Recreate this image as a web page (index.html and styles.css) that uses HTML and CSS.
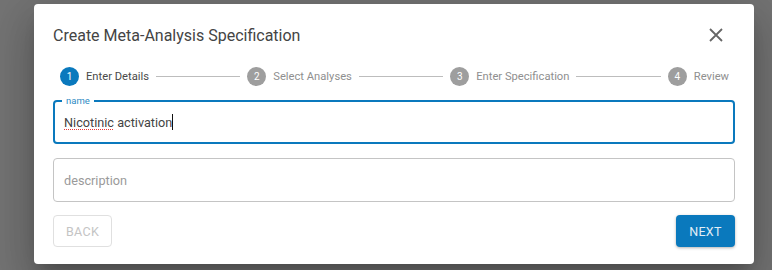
FILE: index.html
```html
<!DOCTYPE html>
<html lang="en">
<head>
    <meta charset="UTF-8">
    <meta name="viewport" content="width=device-width, initial-scale=1.0">
    <title>Create Meta-Analysis Specification</title>
    <link rel="stylesheet" href="styles.css">
</head>
<body>
    <div class="backdrop">
        <div class="dialog">
            <div class="dialog-header">
                <h2 class="dialog-title">Create Meta-Analysis Specification</h2>
                <button class="close-button" aria-label="close">
                    <svg width="14" height="14" viewBox="0 0 14 14">
                        <path d="M1 1 L13 13 M13 1 L1 13" stroke="#666" stroke-width="1.8" fill="none"/>
                    </svg>
                </button>
            </div>

            <div class="stepper">
                <div class="step active"><span class="step-icon">1</span><span class="step-label">Enter Details</span></div>
                <div class="connector"></div>
                <div class="step"><span class="step-icon">2</span><span class="step-label">Select Analyses</span></div>
                <div class="connector"></div>
                <div class="step"><span class="step-icon">3</span><span class="step-label">Enter Specification</span></div>
                <div class="connector"></div>
                <div class="step"><span class="step-icon">4</span><span class="step-label">Review</span></div>
            </div>

            <div class="field focused">
                <span class="field-label">name</span>
                <div class="field-input"><span class="misspelled">Nicotinic</span> activation<span class="caret"></span></div>
            </div>

            <div class="field">
                <div class="field-input placeholder">description</div>
            </div>

            <div class="actions">
                <button class="btn btn-back" disabled>BACK</button>
                <button class="btn btn-next">NEXT</button>
            </div>
        </div>
    </div>
</body>
</html>
```

FILE: styles.css
```css
html, body {
    margin: 0;
    padding: 0;
}
body {
    background-color: #737373;
    font-family: Roboto, 'Liberation Sans', sans-serif;
}
.backdrop {
    height: 270px;
    padding: 4px 18px 0 34px;
    box-sizing: border-box;
}
.dialog {
    width: 720px;
    height: 260px;
    box-sizing: border-box;
    background-color: white;
    border-radius: 4px;
    padding: 15px 19px 0 19px;
    box-shadow: 0 11px 15px -7px rgba(0, 0, 0, 0.2), 0 24px 38px 3px rgba(0, 0, 0, 0.14), 0 9px 46px 8px rgba(0, 0, 0, 0.12);
}

/* Kopfzeile */
.dialog-header {
    display: flex;
    align-items: center;
    justify-content: space-between;
    height: 32px;
}
.dialog-title {
    margin: 0;
    font-size: 16px;
    font-weight: 400;
    color: #444;
}
.close-button {
    background: none;
    border: none;
    padding: 0;
    margin-right: 12px;
    width: 14px;
    height: 14px;
    display: flex;
    cursor: pointer;
}

/* Stepper */
.stepper {
    display: flex;
    align-items: center;
    margin-top: 16px;
    height: 19px;
}
.step {
    display: flex;
    align-items: center;
    padding: 0 7px;
}
.step:last-child {
    padding-right: 6px;
}
.step-icon {
    width: 19px;
    height: 19px;
    border-radius: 50%;
    background-color: #9e9e9e;
    color: white;
    font-size: 10px;
    display: flex;
    align-items: center;
    justify-content: center;
}
.step.active .step-icon {
    background-color: #0a79bd;
}
.step-label {
    margin-left: 7px;
    font-size: 11.2px;
    color: #8f8f8f;
}
.step.active .step-label {
    color: #4a4a4a;
}
.connector {
    flex: 1;
    border-top: 1px solid #bdbdbd;
}

/* Textfelder */
.field {
    position: relative;
    margin-top: 14px;
    height: 44px;
    box-sizing: border-box;
    border: 1px solid #c4c4c4;
    border-radius: 4px;
    display: flex;
    align-items: center;
    padding: 0 10px;
}
.field.focused {
    border: 2px solid #0a79bd;
    padding: 0 9px;
}
.field-label {
    position: absolute;
    top: -7px;
    left: 7px;
    padding: 0 4px;
    background-color: white;
    font-size: 9.5px;
    line-height: 11px;
    color: #2e8bc4;
}
.field-input {
    font-size: 12.7px;
    color: #444;
    display: flex;
    align-items: center;
    white-space: pre;
}
.field-input.placeholder {
    color: #9a9a9a;
}
.misspelled {
    text-decoration: underline dotted #e53935;
    text-decoration-thickness: 1px;
    text-underline-offset: 2px;
}
.caret {
    display: inline-block;
    width: 1px;
    height: 16px;
    background-color: #111;
}

/* Buttons */
.actions {
    display: flex;
    justify-content: space-between;
    margin-top: 13px;
}
.btn {
    height: 32px;
    width: 59px;
    border-radius: 4px;
    font-family: Roboto, 'Liberation Sans', sans-serif;
    font-size: 12.5px;
    letter-spacing: 0.3px;
    padding: 0;
}
.btn-back {
    background-color: white;
    border: 1px solid #e0e0e0;
    color: #c4c4c4;
}
.btn-next {
    background-color: #0a79bd;
    border: none;
    color: #e3eef6;
    box-shadow: 0 1px 3px rgba(0, 0, 0, 0.3);
}
```
